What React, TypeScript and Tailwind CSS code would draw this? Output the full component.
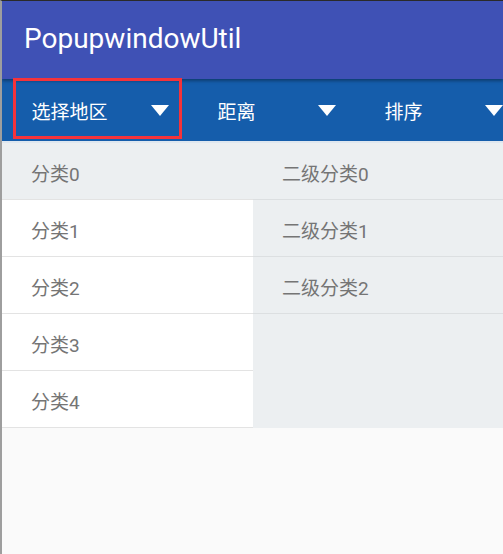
import React from 'react';

const tabs = ['选择地区', '距离', '排序'];
const firstLevel = ['分类0', '分类1', '分类2', '分类3', '分类4'];
const secondLevel = ['二级分类0', '二级分类1', '二级分类2'];

function Triangle() {
    return (
        <svg width="18" height="11" viewBox="0 0 18 11" className="shrink-0">
            <polygon points="0,0 18,0 9,11" fill="#ffffff" />
        </svg>
    );
}

export default function App() {
    return (
        <div
            className="relative flex flex-col w-full h-[554px] overflow-hidden border-t border-t-[#2a2a2a] border-l-2 border-l-[#9e9e9e] bg-[#fafafa]"
            style={{ fontFamily: 'Roboto, "Noto Sans CJK SC", sans-serif' }}
        >
            {/* toolbar */}
            <div className="h-[78px] shrink-0 flex items-center pl-[22px] pb-[2px] bg-[#3f51b5] shadow-[0_2px_3px_rgba(0,0,0,0.35)] z-10">
                <span className="text-[28px] text-white">PopupwindowUtil</span>
            </div>

            {/* filter tabs */}
            <div className="h-[64px] shrink-0 flex bg-[#155dab] border-b-2 border-b-[#dfe7ef]">
                {tabs.map((tab) => (
                    <div key={tab} className="flex-1 flex items-center">
                        <span className="w-[135px] text-center text-[19px] text-white translate-y-[3px]">{tab}</span>
                        <div className="ml-[14px]">
                            <Triangle />
                        </div>
                    </div>
                ))}
            </div>

            {/* popup lists */}
            <div className="flex shrink-0">
                <div className="w-[251px] bg-white">
                    {firstLevel.map((item, index) => (
                        <div
                            key={item}
                            className={`h-[57px] flex items-center pl-[29px] pt-[8px] text-[19px] text-[#757575] border-b border-b-[#e3e3e3] ${index === 0 ? 'bg-[#eceff1]' : 'bg-white'}`}
                        >
                            {item}
                        </div>
                    ))}
                </div>
                <div className="flex-1 bg-[#eceff1]">
                    {secondLevel.map((item) => (
                        <div
                            key={item}
                            className="h-[57px] flex items-center pl-[29px] pt-[8px] text-[19px] text-[#757575] border-b border-b-[#dcdfe1]"
                        >
                            {item}
                        </div>
                    ))}
                </div>
            </div>

            {/* highlight box */}
            <div className="absolute left-[11px] top-[77px] w-[169px] h-[61px] border-[3px] border-[#f5333a] z-20" />
        </div>
    );
}
